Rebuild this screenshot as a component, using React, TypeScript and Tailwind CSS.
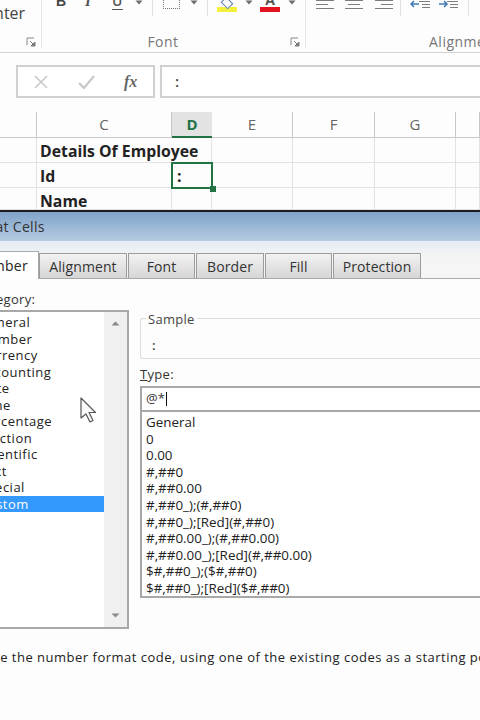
import { ReactNode } from "react"

const categories = ["General", "Number", "Currency", "Accounting", "Date", "Time", "Percentage", "Fraction", "Scientific", "Text", "Special", "Custom"]

const formats = [
  "General",
  "0",
  "0.00",
  "#,##0",
  "#,##0.00",
  "#,##0_);(#,##0)",
  "#,##0_);[Red](#,##0)",
  "#,##0.00_);(#,##0.00)",
  "#,##0.00_);[Red](#,##0.00)",
  "$#,##0_);($#,##0)",
  "$#,##0_);[Red]($#,##0)",
]

const tabs = [
  { label: "Alignment", width: "w-[88px]" },
  { label: "Font", width: "w-[67px]" },
  { label: "Border", width: "w-[68px]" },
  { label: "Fill", width: "w-[67px]" },
  { label: "Protection", width: "w-[88px]" },
]

function Caret() {
  return (
    <svg width="8" height="5" viewBox="0 0 8 5" className="shrink-0">
      <path d="M0.5 0.5h7L4 4.5z" fill="#6b6b6b" />
    </svg>
  )
}

function Launcher() {
  return (
    <svg width="10" height="10" viewBox="0 0 10 10">
      <path d="M1 8V1h7" fill="none" stroke="#8a8a8a" strokeWidth="1" />
      <path d="M4 4l4 4M9 5v4H5z" fill="#7d7d7d" stroke="#7d7d7d" strokeWidth="1" />
    </svg>
  )
}

function AlignLines({ offsets }: { offsets: string[] }) {
  return (
    <div className="flex h-[10px] w-[18px] flex-col gap-[3px]">
      {offsets.map((o, i) => (
        <div key={i} className={`h-[1px] shrink-0 bg-[#7d7d7d] ${o}`} />
      ))}
    </div>
  )
}

function Indent({ flip }: { flip?: boolean }) {
  return (
    <svg width="20" height="10" viewBox="0 0 20 10" className="shrink-0">
      <path d="M9 1.5h11M12 4.5h8M12 7.5h8" stroke="#7d7d7d" strokeWidth="1" fill="none" />
      {flip ? (
        <path d="M1 4h8M6 1l3 3-3 3" stroke="#3f78b5" strokeWidth="1.5" fill="none" />
      ) : (
        <path d="M9 4H1M4 1L1 4l3 3" stroke="#3f78b5" strokeWidth="1.5" fill="none" />
      )}
    </svg>
  )
}

function Sep() {
  return <div className="h-[16px] w-[1px] shrink-0 bg-[#e0e0e0]" />
}

function Ribbon() {
  return (
    <div className="flex h-[53px] border-b border-[#d2d2d2] text-[#666]">
      <div className="relative flex h-[48px] w-[42px] shrink-0 overflow-hidden border-r border-[#e4e4e4]">
        <span className="ml-[-25px] mt-[3px] text-[16px] leading-[20px] text-[#444]">Center</span>
        <div className="absolute right-[5px] top-[37px]"><Launcher /></div>
      </div>

      <div className="relative h-[48px] w-[264px] shrink-0 border-r border-[#e4e4e4]">
        <div className="flex h-[16px] items-start overflow-hidden">
          <span className="ml-[14px] mt-[-7px] w-[26px] text-[14px] font-bold leading-[16px] text-[#444]" style={{ fontFamily: "'Liberation Sans'" }}>B</span>
          <span className="mt-[-7px] w-[30px] pl-[3px] text-[15px] font-bold italic leading-[16px] text-[#555]" style={{ fontFamily: "'Liberation Serif'" }}>I</span>
          <div className="flex w-[10px] flex-col">
            <span className="mt-[-7px] h-[15px] text-[14px] font-semibold leading-[16px] text-[#555]">U</span>
            <div className="mt-[1px] h-[1px] w-[11px] bg-[#555]" />
          </div>
          <div className="ml-[13px] mr-[9px]"><Caret /></div>
          <Sep />
          <div className="ml-[10px] h-[9px] w-[17px] border border-dotted border-[#777] border-t-0" />
          <div className="ml-[10px] mr-[9px]"><Caret /></div>
          <Sep />
          <div className="ml-[9px] flex w-[20px] flex-col items-center">
            <div className="mt-[-1px] h-[8px] w-[10px] rotate-45 border border-[#5b7da8] bg-white" />
            <div className="h-[5px] w-[20px] bg-[#f5f03c]" />
          </div>
          <div className="ml-[8px] mr-[7px]"><Caret /></div>
          <div className="flex w-[20px] flex-col items-center">
            <span className="mt-[-8px] h-[15px] text-[14px] font-bold leading-[15px] text-[#555]">A</span>
            <div className="h-[5px] w-[20px] bg-[#e4121e]" />
          </div>
          <div className="ml-[8px]"><Caret /></div>
        </div>
        <div className="mt-[16px] pr-[21px] text-center text-[14px] leading-[20px] tracking-[0.5px] text-[#777]">Font</div>
        <div className="absolute right-[5px] top-[37px]"><Launcher /></div>
      </div>

      <div className="min-w-0 flex-1 overflow-hidden">
        <div className="flex h-[16px] items-start overflow-hidden pl-[10px]">
          <AlignLines offsets={["w-[18px]", "w-[12px]", "w-[18px]"]} />
          <div className="ml-[11px]"><AlignLines offsets={["w-[18px]", "w-[12px] self-center", "w-[18px]"]} /></div>
          <div className="ml-[12px] mr-[7px]"><AlignLines offsets={["w-[18px]", "w-[12px] self-end", "w-[18px]"]} /></div>
          <Sep />
          <div className="ml-[9px]"><Indent /></div>
          <div className="ml-[8px]"><Indent flip /></div>
          <div className="ml-[10px]"><Sep /></div>
        </div>
        <div className="ml-[123px] mt-[16px] whitespace-nowrap text-[14px] leading-[20px] tracking-[0.5px] text-[#777]">Alignment</div>
      </div>
    </div>
  )
}

function FormulaBar() {
  return (
    <div className="flex h-[59px] gap-[5px] pl-[16px] pt-[12px]">
      <div className="flex h-[33px] w-[139px] shrink-0 items-center border-2 border-[#d0d0d0] bg-white">
        <svg width="14" height="14" viewBox="0 0 14 14" className="ml-[16px]">
          <path d="M1 1l12 12M13 1L1 13" stroke="#c8c8c8" strokeWidth="1.6" fill="none" />
        </svg>
        <svg width="18" height="14" viewBox="0 0 18 14" className="ml-[30px]">
          <path d="M1 8l5 5L16 1" stroke="#c8c8c8" strokeWidth="2.2" fill="none" />
        </svg>
        <span className="ml-[28px] text-[16px] font-bold italic leading-none text-[#666]" style={{ fontFamily: "'Liberation Serif'" }}>fx</span>
      </div>
      <div className="flex h-[33px] min-w-0 flex-1 items-center border-2 border-[#d0d0d0] border-r-0 bg-white pl-[13px] text-[15px] font-semibold text-[#444]">:</div>
    </div>
  )
}

function Sheet() {
  const cell = "border-b border-r border-[#e2e2e2] whitespace-nowrap"
  const head = "flex items-center justify-center border-b border-r border-[#c8c8c8] text-[15px] text-[#666]"
  const bold = "pl-[3px] pt-[1px] text-[15.8px] font-bold leading-[24px] text-[#222]"
  return (
    <div className="relative grid h-[98px] grid-cols-[37px_135px_40px_81px_82px_81px_24px] grid-rows-[26px_25px_25px_22px] overflow-hidden" style={{ fontFamily: "'Open Sans'" }}>
      <div className={head} />
      <div className={head}>C</div>
      <div className="flex items-center justify-center border-b-2 border-[#217346] bg-[#e3e3e3] text-[15px] font-bold text-[#217346]">D</div>
      <div className={head}>E</div>
      <div className={head}>F</div>
      <div className={head}>G</div>
      <div className={head} />

      <div className={cell} />
      <div className={`${bold} border-b border-[#e2e2e2] whitespace-nowrap`}>Details Of Employee</div>
      <div className={cell} />
      <div className={cell} />
      <div className={cell} />
      <div className={cell} />
      <div className={cell} />

      <div className={cell} />
      <div className={`${cell} ${bold}`}>Id</div>
      <div className="relative pl-[5px] pt-[1px] text-[16px] font-bold leading-[24px] text-[#222]">
        :
        <div className="absolute inset-x-[-1px] inset-y-[-1px] border-2 border-[#217346]" />
        <div className="absolute bottom-[-4px] right-[-4px] h-[6px] w-[6px] bg-[#217346]" />
      </div>
      <div className={cell} />
      <div className={cell} />
      <div className={cell} />
      <div className={cell} />

      <div className={cell} />
      <div className={`${cell} ${bold}`}>Name</div>
      <div className={cell} />
      <div className={cell} />
      <div className={cell} />
      <div className={cell} />
      <div className={cell} />
    </div>
  )
}

function Tab({ children, width }: { children: ReactNode; width: string }) {
  return (
    <div className={`flex h-[25px] shrink-0 items-center justify-center border border-b-0 border-[#9c9c9c] bg-gradient-to-b from-[#f2f2f2] to-[#d6d6d6] text-[14px] tracking-[0.1px] text-[#333] ${width}`}>
      {children}
    </div>
  )
}

function CategoryList() {
  return (
    <div className="flex h-[319px] w-[129px] shrink-0 border-2 border-l-0 border-[#a8a8a8] bg-white">
      <div className="w-[104px] shrink-0 overflow-hidden pt-[2px]">
        {categories.map((c) => (
          <div key={c} className={`h-[16.5px] whitespace-nowrap text-[13px] leading-[16.5px] tracking-[0.5px] ${c === "Custom" ? "bg-[#3399ff] text-white" : "text-[#222]"}`}>
            <span className="ml-[-21px]">{c}</span>
          </div>
        ))}
      </div>
      <div className="flex flex-1 flex-col items-center justify-between bg-[#f0f0f0] py-[9px]">
        <svg width="9" height="5" viewBox="0 0 9 5"><path d="M0.5 4.5h8L4.5 0.5z" fill="#8a8a8a" /></svg>
        <svg width="9" height="5" viewBox="0 0 9 5"><path d="M0.5 0.5h8L4.5 4.5z" fill="#8a8a8a" /></svg>
      </div>
    </div>
  )
}

function Dialog() {
  return (
    <div className="relative flex-1 border-t-2 border-[#1c1c1c] bg-[#fdfdfd]">
      <div className="flex h-[29px] items-center overflow-hidden bg-gradient-to-b from-[#7fa3c8] to-[#b6cbe3] text-[14px] tracking-[0.3px] text-[#333]">
        <span className="ml-[-40px] whitespace-nowrap">Format Cells</span>
      </div>
      <div className="flex h-[38px] items-end border-b border-[#a9a9a9] bg-gradient-to-b from-[#e6ecf3] via-[#f5f5f5] to-[#f5f5f5]">
        <div className="mb-[-1px] flex h-[28px] w-[39px] shrink-0 items-center overflow-hidden border-r border-t border-[#a9a9a9] bg-white text-[14px] tracking-[0.3px] text-[#222]">
          <span className="ml-[-28px]">Number</span>
        </div>
        <div className="flex gap-[1px]">
          {tabs.map((t) => (
            <Tab key={t.label} width={t.width}>{t.label}</Tab>
          ))}
        </div>
      </div>

      <div className="flex pt-[12px]">
        <div className="w-[140px] shrink-0">
          <div className="h-[19px] overflow-hidden whitespace-nowrap text-[13px] leading-[16px] tracking-[0.3px] text-[#333]">
            <span className="ml-[-25px]">Category:</span>
          </div>
          <CategoryList />
        </div>
        <div className="min-w-0 flex-1 pt-[27px]">
          <div className="relative h-[41px] rounded-l-[3px] border border-r-0 border-[#dcdcdc]">
            <span className="absolute left-[5px] top-[-8px] bg-[#fdfdfd] px-[2px] text-[13px] leading-[16px] tracking-[0.3px] text-[#444]">Sample</span>
            <span className="absolute left-[11px] top-[18px] text-[13px] font-semibold leading-[16px] text-[#444]">:</span>
          </div>
          <div className="mt-[7px] h-[20px] text-[13px] leading-[16px] tracking-[0.3px] text-[#333]"><span className="underline">T</span>ype:</div>
          <div className="flex h-[26px] items-center border-2 border-r-0 border-[#a8a8a8] bg-white pl-[4px] text-[13px] text-[#333]">
            @*<span className="ml-[1px] h-[14px] w-[1px] bg-[#111]" />
          </div>
          <div className="h-[186px] overflow-hidden border-2 border-r-0 border-t-0 border-[#a8a8a8] bg-white pl-[4px] pt-[2px]">
            {formats.map((f) => (
              <div key={f} className="h-[16.6px] whitespace-nowrap text-[13.4px] leading-[16.6px] text-[#222]">{f}</div>
            ))}
          </div>
        </div>
      </div>

      <div className="mt-[18px] h-[20px] overflow-hidden whitespace-nowrap text-[13px] leading-[20px] tracking-[0.5px] text-[#222]">
        <span className="ml-[-23px]">Type the number format code, using one of the existing codes as a starting point.</span>
      </div>

      <svg width="17" height="27" viewBox="0 0 17 27" className="absolute left-[80px] top-[185px]">
        <path d="M1 1v20l5-4 4 8 3-1.5-4-8h6.5z" fill="#fafafa" stroke="#555" strokeWidth="1.2" strokeLinejoin="round" />
      </svg>
    </div>
  )
}

export default function App() {
  return (
    <div className="flex h-[720px] w-[480px] flex-col overflow-hidden bg-[#fdfdfd]" style={{ fontFamily: "'Open Sans', 'Noto Sans', sans-serif" }}>
      <Ribbon />
      <FormulaBar />
      <Sheet />
      <Dialog />
    </div>
  )
}
